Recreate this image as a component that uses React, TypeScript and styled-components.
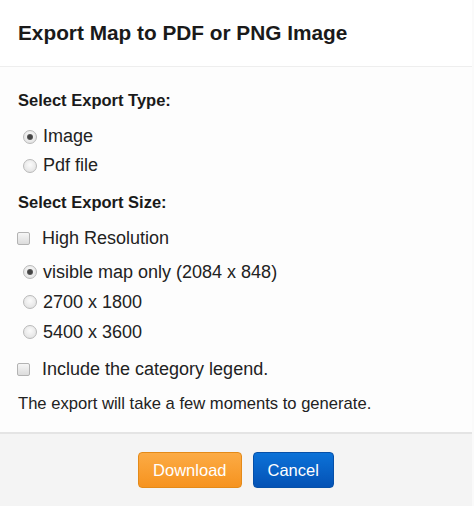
import React, { FunctionComponent } from 'react'
import styled, { createGlobalStyle } from 'styled-components'

const GlobalStyle = createGlobalStyle`
  html, body {
    margin: 0;
    padding: 0;
    background: #ffffff;
  }
  body {
    font-family: "Liberation Sans", Arial, sans-serif;
    color: #222222;
  }
`

const Dialog = styled.div`
  width: 472px;
  height: 506px;
  display: flex;
  flex-direction: column;
  background: #fff;
  border-right: 2px solid #fafafa;
`

const Header = styled.div`
  height: 66px;
  padding: 0 18px;
  display: flex;
  align-items: center;
  border-bottom: 1px solid #eeeeee;
`

const Title = styled.h1`
  margin: 0;
  font-size: 20.8px;
  font-weight: 700;
  color: #1a1a1a;
`

const Body = styled.div`
  flex-grow: 1;
  padding: 23px 18px 0 18px;
  background: #fdfdfd;
  border-bottom: 2px solid #e4e4e4;
`

const SectionTitle = styled.div`
  font-size: 16.5px;
  font-weight: 700;
  color: #1a1a1a;
  height: 20px;
  line-height: 20px;
  white-space: nowrap;
`

const OptionList = styled.div<{ $top: number; $bottom: number }>`
  display: flex;
  flex-direction: column;
  margin: ${p => p.$top}px 0 ${p => p.$bottom}px 0;
`

const Option = styled.label<{ $height?: number }>`
  display: flex;
  align-items: center;
  height: ${p => p.$height ?? 30}px;
  font-size: 18px;
  color: #222;
  white-space: nowrap;
`

const Radio = styled.span<{ $checked?: boolean }>`
  flex-shrink: 0;
  width: 12px;
  height: 12px;
  margin: 0 6px 0 5px;
  border-radius: 50%;
  border: 1px solid #b9b9b9;
  background: radial-gradient(circle at 50% 40%, #fbfbfb 0%, #e6e6e6 70%, #d6d6d6 100%);
  display: flex;
  align-items: center;
  justify-content: center;
  &::after {
    content: '';
    width: 6px;
    height: 6px;
    border-radius: 50%;
    background: ${p => (p.$checked ? 'radial-gradient(circle, #444 40%, #777 100%)' : 'transparent')};
  }
`

const Checkbox = styled.span`
  flex-shrink: 0;
  width: 11px;
  height: 11px;
  margin: 0 12px 0 -1px;
  border-radius: 2px;
  border: 1px solid #b3b3b3;
  background: linear-gradient(#f6f6f6, #dcdcdc);
`

const Note = styled.p`
  margin: 3px 0 0 0;
  font-size: 16.6px;
  line-height: 19px;
  color: #222;
  white-space: nowrap;
`

const Footer = styled.div`
  height: 72px;
  background: #f4f4f4;
  display: flex;
  justify-content: center;
  align-items: flex-start;
  gap: 11px;
  padding-top: 18px;
  box-sizing: border-box;
`

const Button = styled.button<{ $variant: 'orange' | 'blue' }>`
  height: 36px;
  padding: 0 14px;
  border-radius: 4px;
  font-family: "Liberation Sans", Arial, sans-serif;
  font-size: 16.5px;
  color: #fff;
  cursor: pointer;
  border: 1px solid ${p => (p.$variant === 'orange' ? '#e48a18' : '#0650a8')};
  background: ${p =>
    p.$variant === 'orange'
      ? 'linear-gradient(#fcab45, #f6931f)'
      : 'linear-gradient(#0c72d8, #0452b5)'};
`

const App: FunctionComponent = () => (
  <>
    <GlobalStyle />
    <Dialog>
      <Header>
        <Title>Export Map to PDF or PNG Image</Title>
      </Header>
      <Body>
        <SectionTitle>Select Export Type:</SectionTitle>
        <OptionList $top={12} $bottom={12}>
          <Option $height={29}><Radio $checked />Image</Option>
          <Option $height={29}><Radio />Pdf file</Option>
        </OptionList>
        <SectionTitle>Select Export Size:</SectionTitle>
        <OptionList $top={7} $bottom={0}>
          <Option $height={38}><Checkbox />High Resolution</Option>
          <Option><Radio $checked />visible map only (2084 x 848)</Option>
          <Option><Radio />2700 x 1800</Option>
          <Option><Radio />5400 x 3600</Option>
          <Option $height={44}><Checkbox />Include the category legend.</Option>
        </OptionList>
        <Note>The export will take a few moments to generate.</Note>
      </Body>
      <Footer>
        <Button $variant="orange">Download</Button>
        <Button $variant="blue">Cancel</Button>
      </Footer>
    </Dialog>
  </>
)

export default App
